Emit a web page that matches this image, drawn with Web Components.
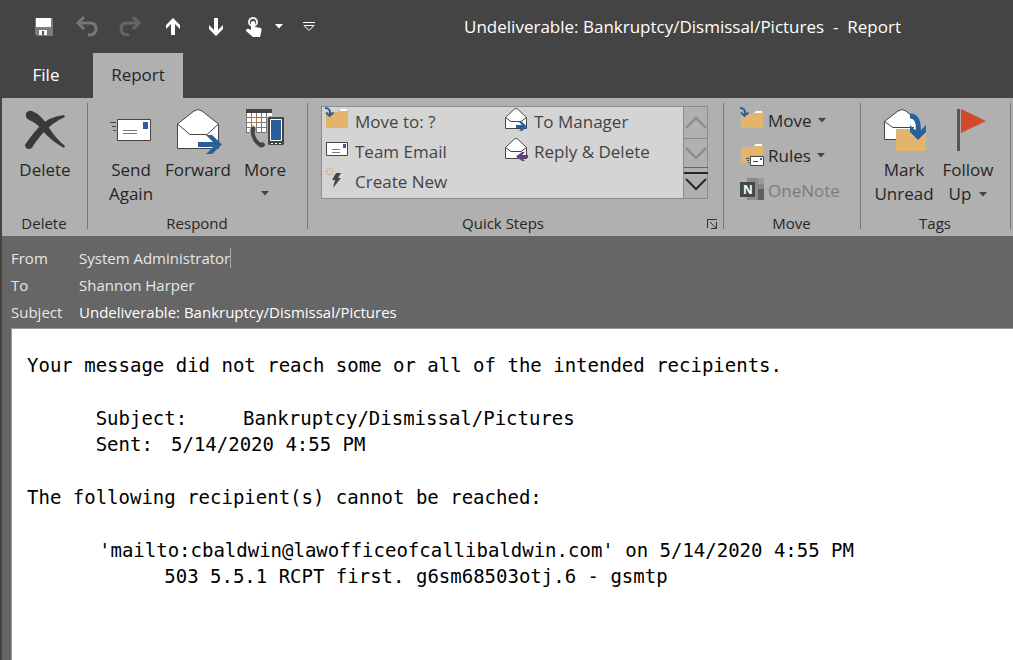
<!DOCTYPE html>
<html lang="en">
<head>
<meta charset="utf-8">
<meta name="viewport" content="width=device-width, initial-scale=1">
<title>Undeliverable: Bankruptcy/Dismissal/Pictures - Report</title>
<style>
  html, body { margin: 0; height: 100%; }
  body { background: #444; font-family: "Open Sans", "Noto Sans", sans-serif; }
</style>
</head>
<body>
<mail-window></mail-window>

<script>
const define = (name, html, setup) => {
  const template = document.createElement('template');
  template.innerHTML = html;
  customElements.define(name, class extends HTMLElement {
    connectedCallback() {
      if (this.shadowRoot) return;
      this.attachShadow({ mode: 'open' }).append(template.content.cloneNode(true));
      if (setup) setup(this, this.shadowRoot);
    }
  });
};

const envelopeSmall = '<path d="M1.5 10.5 L10.5 2 Q12 1 13.500 2 L22.500 10.500 V21.500 H1.500Z" fill="#fff" stroke="#444"/><path d="M1.500 10.500 L7 14.500 H17 L22.500 10.500" fill="none" stroke="#444"/>';
const curl = '<path d="M0 1 Q6 1 5 8" fill="none" stroke="#2a6099" stroke-width="2"/><path d="M1 5.500 L4.500 9 L8.500 5.500" fill="none" stroke="#2a6099" stroke-width="2"/>';
const caret = '<path d="M0 0H8L4 4.500Z" fill="currentColor"/>';

/* name: [width, height, drawing] */
const icons = {
  caret: [8, 5, caret],
  save: [20, 20, '<path d="M1 1H19V19H3L1 17Z" fill="#7c7c7c"/><path d="M2 1H17V10H2Z" fill="#fff"/><path d="M5 13H13V18H5Z" fill="#f4f4f4"/><path d="M8 14H10V18H8Z" fill="#555"/>'],
  undo: [22, 20, '<path d="M2 6H14Q20 6 20 12Q20 18 12 18" fill="none" stroke="#777" stroke-width="3"/><path d="M8 0L2 6L8 12" fill="none" stroke="#777" stroke-width="3"/>'],
  redo: [22, 20, '<path d="M20 6H8Q2 6 2 12Q2 18 10 18" fill="none" stroke="#666" stroke-width="3"/><path d="M14 0L20 6L14 12" fill="none" stroke="#666" stroke-width="3"/>'],
  up: [16, 20, '<path d="M8 3V18" stroke="#fff" stroke-width="4"/><path d="M8 1L15 8V12L8 5L1 12V8Z" fill="#fff"/>'],
  down: [16, 20, '<path d="M8 1V17" stroke="#fff" stroke-width="4"/><path d="M8 19L15 12V8L8 15L1 8V12Z" fill="#fff"/>'],
  touch: [18, 22, '<circle cx="8" cy="6" r="4" fill="none" stroke="#eee" stroke-width="2"/><path d="M6 6Q8 4 10 6V11L16 12Q17 13 16 17L15 21H8L1 15Q1 12 4 13L6 14Z" fill="#fff"/>'],
  customize: [14, 12, '<path d="M1 1.500H13" stroke="#fff"/><path d="M2 4.500H12L7 9.500Z" fill="none" stroke="#fff"/>'],
  del: [48, 48, '<path d="M5 7Q8 3 13 6Q20 9 27 20Q34 32 44 40L43 42Q30 35 21 24Q16 17 8 14Q4 12 5 7Z" fill="#3a3a3a"/><path d="M4 39Q5 45 11 42Q14 36 22 27Q32 16 44 11L43 9Q29 10 18 21Q9 31 4 39Z" fill="#3a3a3a"/>'],
  send: [48, 48, '<path d="M10.500 13.500H43.500V34.500H10.500Z" fill="#fff" stroke="#444"/><path d="M36 16H41V23H36Z" fill="#2a6099"/><path d="M16 24.500H30M16 27.500H30" stroke="#777"/><path d="M3 16.500H9M5 20.500H9M6 24.500H9" stroke="#444"/>'],
  forward: [48, 48, '<path d="M3.500 18L20 5Q24 2 28 5L44.500 18V42.500H3.500Z" fill="#fff" stroke="#444"/><path d="M3.500 18L16 28.500H33L44.500 18" fill="none" stroke="#444"/><path d="M24 36H39L32 29H38L48 38.500L38 48H32L39 41H24Z" fill="#2a6099"/>'],
  more: [48, 48, '<path d="M5 7H31V27H5Z" fill="#fff"/><path d="M5.500 7V27M10.500 7V27M15.500 7V27M20.500 7V27M25.500 7V27M5 11.500H31M5 16.500H31M5 21.500H31M5 26.500H31" stroke="#777"/><path d="M5 3H31V7H5Z" fill="#444"/><path d="M10.500 11.500H15.500V16.500H10.500Z" fill="#fff" stroke="#d07a30"/><path d="M11 20Q14 19 15 23L14 27Q15 33 19 36L23 36L25 39Q22 43 19 42Q10 36 9 25Q9 21 11 20Z" fill="#444" stroke="#b0b0b0"/><rect x="26.500" y="10.500" width="17" height="29" rx="2" fill="#444" stroke="#b0b0b0"/><path d="M29.500 13.500H40.500V34.500H29.500Z" fill="#2a6099" stroke="#fff"/><path d="M30 37.500H40" stroke="#fff" stroke-dasharray="2 2"/>'],
  unread: [48, 48, '<path d="M4.500 15.500L18 5Q22 2 26 5L38 15.500V33.500H4.500Z" fill="#fff" stroke="#444"/><path d="M4.500 15.500L13 21.500H34" fill="none" stroke="#444"/><path d="M16 23H46V45H16Z" fill="#e3b56c"/><path d="M17 23L28 35Q31 38 34 35L45 23" fill="none" stroke="#c2b797"/><path d="M36 13H48V23H36Z" fill="#b0b0b0"/><path d="M30 10Q40 10 38 28" fill="none" stroke="#2a6099" stroke-width="5"/><path d="M30 19V26L38 34L46 26V19L38 27Z" fill="#2a6099"/>'],
  flag: [48, 48, '<path d="M13 3H16V45H13Z" fill="#555"/><path d="M17 3L42 15L17 27Z" fill="#cf4a29"/>'],
  moveTo: [24, 30, '<path d="M1 5H12L14 3H23V21H1Z" fill="#e3b56c"/><path d="M14 4L16 2H22V4Z" fill="#fff"/>' + curl],
  team: [24, 30, '<path d="M1.500 5.500H22.500V18.500H1.500Z" fill="#fff" stroke="#444"/><path d="M18 7H21V11H18Z" fill="#2a6099"/><path d="M7 12.500H15M7 15.500H15" stroke="#777"/>'],
  create: [24, 30, '<path d="M11 6H16L13 11H16L8 21L10 13H7Z" fill="#444"/><g stroke="#e8a860"><path d="M4.500 0V3M4.500 6V9M0 4.500H3M6 4.500H9M1 1L3 3M6 6L8 8M8 1L6 3M3 6L1 8"/></g>'],
  toManager: [24, 30, envelopeSmall + '<path d="M12 18H18L15 15H18L23 19.500L18 24H15L18 21H12Z" fill="#2a6099"/>'],
  replyDelete: [24, 30, envelopeSmall + '<path d="M24 18H18L21 15H18L12 19.500L18 24H21L18 21H24Z" fill="#6b3a8e"/>'],
  move: [24, 35, '<path d="M1 11H12L14 9H23V25H1Z" fill="#e3b56c"/><path d="M14 10L16 8H22V10Z" fill="#fff"/><g transform="translate(0 4)">' + curl + '</g>'],
  rules: [24, 35, '<path d="M1 9H12L14 8H23V25H1Z" fill="#e3b56c"/><path d="M14 8L16 6H22V8Z" fill="#fff"/><path d="M9 17H24V28H9Z" fill="#b0b0b0"/><path d="M10.500 18.500H23.500V27.500H10.500Z" fill="#fff" stroke="#444"/><path d="M20 20H22V22H20Z" fill="#2a6099"/><path d="M13 23.500H18M6 20.500H9M7 22.500H9M8 24.500H9" stroke="#444"/>'],
  oneNote: [24, 35, '<path d="M7 5H24V27H7Z" fill="#8c8c8c"/><path d="M18 5H24V11H18Z" fill="#9a9a9a"/><path d="M18 11H24V16H18Z" fill="#858585"/><path d="M18 16H24V27H18Z" fill="#5f5f5f"/><path d="M0 9H15V24H0Z" fill="#474747"/><text x="3" y="21" font-size="12" font-weight="700" fill="#fff">N</text>'],
  chevronUp: [22, 14, '<path d="M1 12L11 2L21 12" fill="none" stroke="currentColor" stroke-width="2"/>'],
  chevronDown: [22, 14, '<path d="M1 2L11 12L21 2" fill="none" stroke="currentColor" stroke-width="2"/>'],
  expand: [24, 24, '<path d="M0 2H24" stroke="currentColor" stroke-width="2"/><path d="M2 8L12 18L22 8" fill="none" stroke="currentColor" stroke-width="2"/>'],
  launcher: [12, 12, '<path d="M1.500 10V1.500H11M4 4L10 10M10.500 4V10.500H5" fill="none" stroke="#333"/>']
};

define('ui-icon', '<style>:host{display:block;flex:none}svg{display:block;overflow:visible}</style>', (host, root) => {
  const [w, h, drawing] = icons[host.getAttribute('name')];
  root.innerHTML += `<svg width="${w}" height="${h}" viewBox="0 0 ${w} ${h}" aria-hidden="true">${drawing}</svg>`;
});

const makeIcon = name => {
  const icon = document.createElement('ui-icon');
  icon.setAttribute('name', name);
  return icon;
};

const reset = 'button{font:inherit;color:inherit;background:none;border:0;padding:0;margin:0;cursor:pointer}';

define('title-bar', `
<style>
  ${reset}
  :host { display: flex; align-items: center; height: 53px; background: #444; color: #fff; font-size: 17px; }
  nav { display: flex; flex: none; padding-left: 22px; }
  button { display: flex; align-items: center; justify-content: center; width: 43px; height: 32px; }
  .touch { width: 34px; }
  .arrow { width: 15px; }
  .customize { width: 46px; }
  h1 { flex: 1; margin: 0; padding-left: 20px; font-size: 17px; font-weight: 400; line-height: 24px; text-align: center; white-space: pre; }
</style>
<nav aria-label="Quick access">
  <button aria-label="Save"><ui-icon name="save"></ui-icon></button>
  <button aria-label="Undo"><ui-icon name="undo"></ui-icon></button>
  <button aria-label="Redo"><ui-icon name="redo"></ui-icon></button>
  <button aria-label="Previous item"><ui-icon name="up"></ui-icon></button>
  <button aria-label="Next item"><ui-icon name="down"></ui-icon></button>
  <button class="touch" aria-label="Touch mode"><ui-icon name="touch"></ui-icon></button>
  <button class="arrow" aria-label="Touch mode options"><ui-icon name="caret"></ui-icon></button>
  <button class="customize" aria-label="Customize toolbar"><ui-icon name="customize"></ui-icon></button>
</nav>
<h1><slot></slot></h1>`);

define('ribbon-tabs', `
<style>
  ${reset}
  :host { display: flex; height: 45px; color: #fff; font-size: 17px; line-height: 24px; }
  button { width: 90px; padding-bottom: 2px; }
  .file { width: 91px; padding-right: 3px; }
  button[aria-selected="true"] { background: #b0b0b0; color: #262626; }
</style>
<button class="file" role="tab">File</button><button role="tab" aria-selected="true">Report</button>`);

define('ribbon-group', `
<style>
  ${reset}
  :host { display: flex; position: relative; box-sizing: border-box; flex-direction: column; flex: none; height: 138px; }
  :host([wide]) { flex: 1; }
  :host::after { content: ""; position: absolute; right: 0; top: 5px; bottom: 7px; width: 1px; background: #777; }
  .content { display: flex; flex: 1; justify-content: center; }
  h2 { margin: 0; padding-right: 2px; font-size: 15px; font-weight: 400; line-height: 26px; text-align: center; }
  .launch { position: absolute; right: 6px; bottom: 6px; }
  :host([wide]) h2 { padding-right: 26px; }
</style>
<div class="content"><slot></slot></div>
<h2></h2>
<button class="launch" aria-label="More options"><ui-icon name="launcher"></ui-icon></button>`, (host, root) => {
  root.querySelector('h2').textContent = host.getAttribute('label');
  if (!host.hasAttribute('wide')) root.querySelector('.launch').remove();
});

define('ribbon-button', `
<style>
  ${reset}
  :host { display: block; flex: none; width: 67px; }
  button { display: flex; flex-direction: column; align-items: center; width: 100%; padding-top: 8px; line-height: 24px; }
  ui-icon { margin-bottom: 4px; }
</style>
<button><slot></slot></button>`, (host, root) => {
  root.querySelector('button').prepend(makeIcon(host.getAttribute('icon')));
});

define('row-button', `
<style>
  ${reset}
  :host { display: block; }
  :host([muted]) { color: #7c7c7c; }
  button { display: flex; align-items: center; text-align: left; gap: 4px; white-space: nowrap; line-height: 24px; }
  :host([step]) button { gap: 6px; }
  .menu { margin-left: 2px; color: #444; }
</style>
<button><slot></slot></button>`, (host, root) => {
  const button = root.querySelector('button');
  button.prepend(makeIcon(host.getAttribute('icon')));
  if (host.hasAttribute('menu')) {
    const arrow = makeIcon('caret');
    arrow.className = 'menu';
    button.append(arrow);
  }
});

define('quick-steps', `
<style>
  ${reset}
  :host { display: flex; flex: 1; box-sizing: border-box; height: 93px; margin: 8px 16px 0 13px; border: 1px solid #8c8c8c; background: #d4d4d4; color: #444; font-size: 17px; }
  .steps { display: grid; flex: 1; grid-template-columns: 1fr 1fr; grid-auto-rows: 30px; padding-left: 3px; }
  .scroll { display: grid; grid-template-rows: 31px 29px 1fr; width: 23px; background: #b0b0b0; border-left: 1px solid #8c8c8c; color: #888; }
  .scroll button { display: flex; align-items: center; justify-content: center; }
  .scroll button + button { border-top: 1px solid #888; }
  .scroll .last { color: #262626; border-color: #666; }
</style>
<div class="steps">
  <row-button step icon="moveTo">Move to: ?</row-button>
  <row-button step icon="toManager">To Manager</row-button>
  <row-button step icon="team">Team Email</row-button>
  <row-button step icon="replyDelete">Reply &amp; Delete</row-button>
  <row-button step icon="create">Create New</row-button>
</div>
<div class="scroll">
  <button aria-label="Previous row"><ui-icon name="chevronUp"></ui-icon></button>
  <button aria-label="Next row"><ui-icon name="chevronDown"></ui-icon></button>
  <button class="last" aria-label="All quick steps"><ui-icon name="expand"></ui-icon></button>
</div>`);

define('report-ribbon', `
<style>
  :host { display: flex; background: #b0b0b0; color: #262626; font-size: 17px; padding-right: 2px; }
  .delete { width: 86px; }
  .respond { width: 220px; }
  .move { width: 137px; }
  .tags { width: 150px; }
  .rows { flex: 1; padding: 5px 0 0 16px; }
  .up { display: flex; align-items: center; gap: 8px; }
  ui-icon { color: #444; }
  .arrow { padding-top: 9px; }
  .tags ribbon-button { width: 64px; }
</style>
<ribbon-group class="delete" label="Delete">
  <ribbon-button icon="del"><span>Delete</span></ribbon-button>
</ribbon-group>
<ribbon-group class="respond" label="Respond">
  <ribbon-button icon="send"><span>Send</span><span>Again</span></ribbon-button>
  <ribbon-button icon="forward"><span>Forward</span></ribbon-button>
  <ribbon-button icon="more"><span>More</span><ui-icon class="arrow" name="caret"></ui-icon></ribbon-button>
</ribbon-group>
<ribbon-group wide label="Quick Steps"><quick-steps></quick-steps></ribbon-group>
<ribbon-group class="move" label="Move">
  <div class="rows">
    <row-button icon="move" menu>Move</row-button>
    <row-button icon="rules" menu>Rules</row-button>
    <row-button icon="oneNote" muted>OneNote</row-button>
  </div>
</ribbon-group>
<ribbon-group class="tags" label="Tags">
  <ribbon-button icon="unread"><span>Mark</span><span>Unread</span></ribbon-button>
  <ribbon-button icon="flag"><span>Follow</span><span class="up">Up <ui-icon name="caret"></ui-icon></span></ribbon-button>
</ribbon-group>`);

define('message-header', `
<style>
  :host { display: block; padding: 9px 9px 2px; background: #666; color: #e6e6e6; font-size: 15px; line-height: 27px; }
  dl { display: grid; grid-template-columns: 68px 1fr; margin: 0; }
  dd { margin: 0; }
  .caret { border-right: 1px solid #aaa; }
  .subject { color: #fff; }
</style>
<dl>
  <dt>From</dt><dd><span class="caret">System Administrator</span></dd>
  <dt>To</dt><dd>Shannon Harper</dd>
  <dt>Subject</dt><dd class="subject">Undeliverable: Bankruptcy/Dismissal/Pictures</dd>
</dl>`);

define('message-body', `
<style>
  :host { display: block; flex: 1; margin-left: 9px; padding: 23px 15px; background: #fff; border: solid #999; border-width: 1px 0 0 1px; color: #000; }
  p { margin: 0 0 27px; font: 19px/26px "DejaVu Sans Mono", monospace; white-space: pre-wrap; tab-size: 72px; }
</style>
<p>Your message did not reach some or all of the intended recipients.</p>
<p>      Subject:&#9;Bankruptcy/Dismissal/Pictures
      Sent:&#9;5/14/2020 4:55 PM</p>
<p>The following recipient(s) cannot be reached:</p>
<p>&#9;'mailto:cbaldwin@lawofficeofcallibaldwin.com' on 5/14/2020 4:55 PM
            503 5.5.1 RCPT first. g6sm68503otj.6 - gsmtp</p>`);

define('mail-window', `
<style>
  :host { display: flex; flex-direction: column; box-sizing: border-box; min-height: 100vh; padding-left: 2px; background: #444; }
  title-bar { margin-left: -2px; }
  main { display: flex; flex: 1; flex-direction: column; background: #666; }
</style>
<title-bar>Undeliverable: Bankruptcy/Dismissal/Pictures  -  Report</title-bar>
<ribbon-tabs></ribbon-tabs>
<report-ribbon></report-ribbon>
<main>
  <message-header></message-header>
  <message-body></message-body>
</main>`);
</script>
</body>
</html>
